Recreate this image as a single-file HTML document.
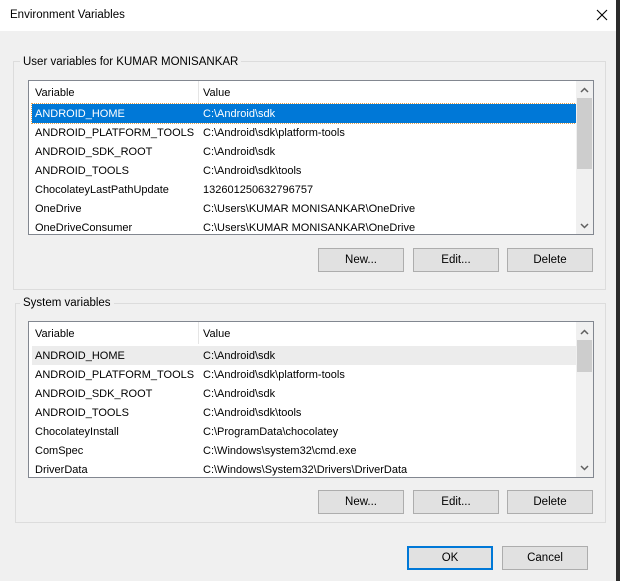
<!DOCTYPE html>
<html><head><style>
*{margin:0;padding:0;box-sizing:border-box}
body{width:620px;height:581px;background:#f0f0f0;font-family:"Liberation Sans",sans-serif;font-size:11px;color:#000;position:relative;overflow:hidden}
.a{position:absolute}
.title{left:0;top:0;width:616px;height:31px;background:#fff}
.dark{left:616px;top:0;width:4px;height:581px;background:#2b2b2b}
.grp{border:1px solid #dcdcdc}
.lbl{background:#f0f0f0;padding:0 3px;white-space:nowrap;font-size:11.5px}
.list{background:#fff;border:1px solid #828790;overflow:hidden}
.row{position:absolute;left:6px;height:19px;line-height:20px;white-space:nowrap}
.row span{position:absolute;left:168px}
.sb{background:#f0f0f0}
.th{background:#cdcdcd}
.btn{background:#e1e1e1;border:1px solid #adadad;text-align:center;line-height:22px;font-size:11.5px}
</style></head><body>
<div class="a title"></div>
<div class="a" style="left:10px;top:9px;font-size:11.5px">Environment Variables</div>
<svg class="a" style="left:596px;top:9px" width="12" height="12"><path d="M1 1L11 11M11 1L1 11" stroke="#000" stroke-width="1.1"/></svg>
<div class="a dark"></div>

<div class="a grp" style="left:13px;top:61px;width:593px;height:229px"></div>
<div class="a lbl" style="left:20px;top:55px;top:56px">User variables for KUMAR MONISANKAR</div>
<div class="a list" style="left:28px;top:80px;width:566px;height:155px">
 <div class="a" style="left:0;top:0;width:547px;height:22px;line-height:24px">
  <div class="a" style="left:6px">Variable</div>
  <div class="a" style="left:169px;top:0;width:1px;height:22px;background:#e5e5e5"></div>
  <div class="a" style="left:174px">Value</div>
 </div>
 <div class="a" style="left:3px;top:23px;width:544px;height:19px;background:#0078d7;outline:1px dotted #e0a050"></div>
 <div class="row" style="top:23px;color:#fff">ANDROID_HOME<span>C:\Android\sdk</span></div>
 <div class="row" style="top:42px">ANDROID_PLATFORM_TOOLS<span>C:\Android\sdk\platform-tools</span></div>
 <div class="row" style="top:61px">ANDROID_SDK_ROOT<span>C:\Android\sdk</span></div>
 <div class="row" style="top:80px">ANDROID_TOOLS<span>C:\Android\sdk\tools</span></div>
 <div class="row" style="top:99px">ChocolateyLastPathUpdate<span>132601250632796757</span></div>
 <div class="row" style="top:118px">OneDrive<span>C:\Users\KUMAR MONISANKAR\OneDrive</span></div>
 <div class="row" style="top:137px">OneDriveConsumer<span>C:\Users\KUMAR MONISANKAR\OneDrive</span></div>
 <div class="a sb" style="left:547px;top:0;width:17px;height:153px"></div>
 <div class="a th" style="left:548px;top:17px;width:15px;height:71px"></div>
 <svg class="a" style="left:551px;top:6px" width="9" height="6"><path d="M1 5L4.5 1.5L8 5" stroke="#606060" stroke-width="1.5" fill="none"/></svg>
 <svg class="a" style="left:551px;top:142px" width="9" height="6"><path d="M1 1L4.5 4.5L8 1" stroke="#606060" stroke-width="1.5" fill="none"/></svg>
</div>
<div class="a btn" style="left:318px;top:248px;width:86px;height:24px">New...</div>
<div class="a btn" style="left:413px;top:248px;width:86px;height:24px">Edit...</div>
<div class="a btn" style="left:507px;top:248px;width:86px;height:24px">Delete</div>

<div class="a grp" style="left:15px;top:303px;width:591px;height:220px"></div>
<div class="a lbl" style="left:20px;top:297px">System variables</div>
<div class="a list" style="left:28px;top:321px;width:566px;height:157px">
 <div class="a" style="left:0;top:0;width:547px;height:22px;line-height:24px">
  <div class="a" style="left:6px">Variable</div>
  <div class="a" style="left:169px;top:0;width:1px;height:22px;background:#e5e5e5"></div>
  <div class="a" style="left:174px">Value</div>
 </div>
 <div class="a" style="left:3px;top:24px;width:544px;height:19px;background:#ececec"></div>
 <div class="row" style="top:24px">ANDROID_HOME<span>C:\Android\sdk</span></div>
 <div class="row" style="top:43px">ANDROID_PLATFORM_TOOLS<span>C:\Android\sdk\platform-tools</span></div>
 <div class="row" style="top:62px">ANDROID_SDK_ROOT<span>C:\Android\sdk</span></div>
 <div class="row" style="top:81px">ANDROID_TOOLS<span>C:\Android\sdk\tools</span></div>
 <div class="row" style="top:100px">ChocolateyInstall<span>C:\ProgramData\chocolatey</span></div>
 <div class="row" style="top:119px">ComSpec<span>C:\Windows\system32\cmd.exe</span></div>
 <div class="row" style="top:138px">DriverData<span>C:\Windows\System32\Drivers\DriverData</span></div>
 <div class="a sb" style="left:547px;top:0;width:17px;height:155px"></div>
 <div class="a th" style="left:548px;top:18px;width:15px;height:32px"></div>
 <svg class="a" style="left:551px;top:7px" width="9" height="6"><path d="M1 5L4.5 1.5L8 5" stroke="#606060" stroke-width="1.5" fill="none"/></svg>
 <svg class="a" style="left:551px;top:143px" width="9" height="6"><path d="M1 1L4.5 4.5L8 1" stroke="#606060" stroke-width="1.5" fill="none"/></svg>
</div>
<div class="a btn" style="left:318px;top:490px;width:86px;height:24px">New...</div>
<div class="a btn" style="left:413px;top:490px;width:86px;height:24px">Edit...</div>
<div class="a btn" style="left:507px;top:490px;width:86px;height:24px">Delete</div>

<div class="a btn" style="left:407px;top:546px;width:86px;height:24px;border:2px solid #0078d7;line-height:20px">OK</div>
<div class="a btn" style="left:502px;top:546px;width:86px;height:24px">Cancel</div>
</body></html>
